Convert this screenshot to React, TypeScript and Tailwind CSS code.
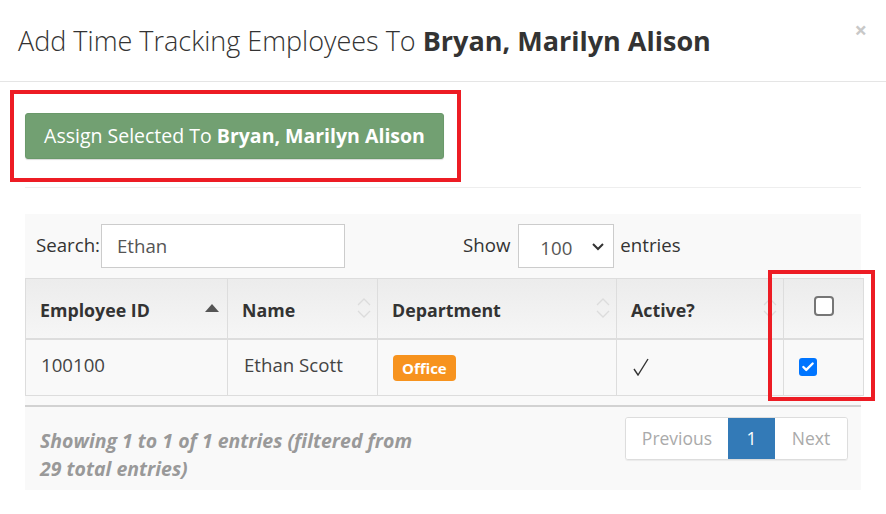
import { Check } from 'lucide-react'

const font = { fontFamily: '"Open Sans", "Noto Sans", Arial, sans-serif' }

function SortBoth() {
  return (
    <svg width="16" height="24" viewBox="0 0 16 24" fill="none" stroke="#dcdcdc" strokeWidth="1.3">
      <path d="M2 9 L8 3 L14 9" />
      <path d="M2 15 L8 21 L14 15" />
    </svg>
  )
}

function SortUp() {
  return (
    <svg width="14" height="8" viewBox="0 0 14 8">
      <path d="M0 8 L7 0 L14 8 Z" fill="#555" />
    </svg>
  )
}

function ThinCheck() {
  return (
    <svg width="16" height="18" viewBox="0 0 16 18" fill="none" stroke="#333" strokeWidth="1.4">
      <path d="M1 11 L5 17 L15 1" />
    </svg>
  )
}

export default function App() {
  return (
    <div className="relative w-[886px] h-[514px] bg-white text-[#333] overflow-hidden" style={font}>
      {/* Header */}
      <div className="flex h-[82px] items-start justify-between border-b border-[#e5e5e5] pl-[18px] pr-[19px]">
        <h1 className="mt-[22px] text-[27px] font-light leading-[38px] text-[#333]">
          Add Time Tracking Employees To <span className="font-bold">Bryan, Marilyn Alison</span>
        </h1>
        <span className="mt-[18px] text-[22px] font-bold leading-none text-[#c8c8c8]">×</span>
      </div>

      {/* Assign button (highlighted) */}
      <div className="ml-[10px] mt-[8px] h-[92px] w-[451px] border-4 border-[#ed1c24] pl-[11px] pt-[19px]">
        <button className="flex h-[46px] w-[419px] items-center justify-center rounded-[3px] border border-[#6a996a] bg-[#72a072] text-[19.5px] text-white shadow-[0_1px_1px_rgba(0,0,0,0.15)]">
          Assign Selected To&nbsp;<span className="font-bold">Bryan, Marilyn Alison</span>
        </button>
      </div>

      <div className="mx-[25px] mt-[5px] h-px bg-[#eee]" />

      {/* Data table panel */}
      <div className="mx-[25px] mt-[26px] bg-[#f9f9f9] text-[18.67px]">
        <div className="flex h-[64px] items-start pt-[10px] pl-[11px]">
          <label className="mt-[7px] text-[#333]">Search:</label>
          <div className="ml-[1px] flex h-[44px] w-[244px] items-center border border-[#ccc] bg-white pl-[15px] text-[#555]">
            Ethan
          </div>
          <label className="ml-[118px] mt-[7px] text-[#333]">Show</label>
          <div className="ml-[8px] flex h-[44px] w-[96px] items-center justify-between border border-[#ccc] bg-white pl-[21px] pr-[8px] text-[#555]">
            <span className="mt-[3px]">100</span>
            <svg width="14" height="9" viewBox="0 0 14 9" fill="none" stroke="#333" strokeWidth="2">
              <path d="M2 2 L7 7 L12 2" />
            </svg>
          </div>
          <label className="ml-[6px] mt-[7px] text-[#333]">entries</label>
        </div>

        <table className="w-[838px] table-fixed border-collapse">
          <colgroup>
            <col className="w-[202px]" />
            <col className="w-[150px]" />
            <col className="w-[239px]" />
            <col className="w-[167px]" />
            <col className="w-[80px]" />
          </colgroup>
          <thead>
            <tr className="h-[60px] bg-gradient-to-b from-[#ececec] to-[#f6f6f6] text-[17.8px] font-bold text-[#333]">
              <th className="border border-b-2 border-[#ddd] pl-[14px] pt-[5px] text-left">
                <div className="flex items-center justify-between pr-[8px]">
                  <span>Employee ID</span>
                  <span className="-mt-[6px]"><SortUp /></span>
                </div>
              </th>
              <th className="border border-b-2 border-[#ddd] pl-[14px] pt-[5px] text-left">
                <div className="flex items-center justify-between pr-[5px]">
                  <span>Name</span>
                  <span className="-mt-[6px]"><SortBoth /></span>
                </div>
              </th>
              <th className="border border-b-2 border-[#ddd] pl-[14px] pt-[5px] text-left">
                <div className="flex items-center justify-between pr-[5px]">
                  <span>Department</span>
                  <span className="-mt-[6px]"><SortBoth /></span>
                </div>
              </th>
              <th className="border border-b-2 border-[#ddd] pl-[14px] pt-[5px] text-left">
                <div className="flex items-center justify-between pr-[5px]">
                  <span>Active?</span>
                  <span className="-mt-[6px]"><SortBoth /></span>
                </div>
              </th>
              <th className="border border-b-2 border-[#ddd]">
                <div className="flex justify-center pb-[4px]">
                  <span className="block h-[20px] w-[20px] rounded-[4px] border-2 border-[#767676] bg-white" />
                </div>
              </th>
            </tr>
          </thead>
          <tbody>
            <tr className="h-[57px] bg-[#f9f9f9] text-[#444]">
              <td className="border border-[#ddd] pb-[4px] pl-[15px]">100100</td>
              <td className="border border-[#ddd] pb-[4px] pl-[16px]">Ethan Scott</td>
              <td className="border border-[#ddd] pl-[15px]">
                <span className="inline-block rounded-[4px] bg-[#f7931e] px-[9px] py-[1px] text-[15px] font-bold leading-[24px] text-white">
                  Office
                </span>
              </td>
              <td className="border border-[#ddd] pl-[16px]">
                <span className="flex"><ThinCheck /></span>
              </td>
              <td className="border border-[#ddd] pl-[15px]">
                <span className="flex h-[18px] w-[18px] items-center justify-center rounded-[3px] bg-[#0075ff]">
                  <Check size={14} strokeWidth={4} color="#fff" />
                </span>
              </td>
            </tr>
          </tbody>
        </table>

        <div className="mt-[9px] flex h-[85px] items-start justify-between border-t-2 border-[#d2d2d2] pl-[15px] pr-[13px]">
          <p className="mt-[20px] w-[392px] text-[19.5px] font-bold italic leading-[28px] text-[#999]">
            Showing 1 to 1 of 1 entries (filtered from 29 total entries)
          </p>
          <div className="mt-[10px] flex h-[43px] overflow-hidden rounded-[3px] border border-[#ddd] text-[17.5px] shadow-[0_1px_1px_rgba(0,0,0,0.06)]">
            <span className="flex w-[102px] items-center justify-center bg-white text-[#aaa]">Previous</span>
            <span className="flex w-[47px] items-center justify-center bg-[#337ab7] text-white">1</span>
            <span className="flex w-[72px] items-center justify-center bg-white text-[#aaa]">Next</span>
          </div>
        </div>
      </div>

      {/* Highlight around the select column */}
      <div className="absolute left-[768px] top-[270px] h-[131px] w-[107px] border-4 border-[#ed1c24]" />
    </div>
  )
}
